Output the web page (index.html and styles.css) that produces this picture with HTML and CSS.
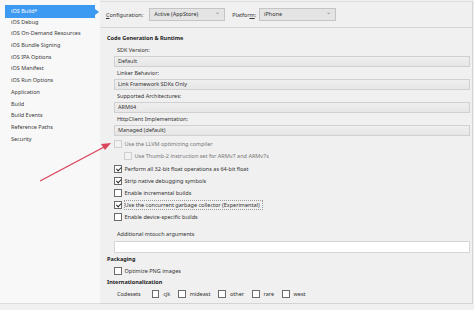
FILE: index.html
```html
<!DOCTYPE html>
<html lang="en">
<head>
    <meta charset="UTF-8">
    <title>iOS Build Options</title>
    <link rel="stylesheet" href="styles.css">
</head>
<body>
    <div class="window">
        <ul class="sidebar">
            <li class="active">iOS Build*</li>
            <li>iOS Debug</li>
            <li>iOS On-Demand Resources</li>
            <li>iOS Bundle Signing</li>
            <li>iOS IPA Options</li>
            <li>iOS Manifest</li>
            <li>iOS Run Options</li>
            <li>Application</li>
            <li>Build</li>
            <li>Build Events</li>
            <li>Reference Paths</li>
            <li>Security</li>
        </ul>

        <div class="main">
            <div class="toolbar">
                <span class="tb-label"><u>C</u>onfiguration:</span>
                <div class="combo combo-config">Active (AppStore)<span class="chev">&#8964;</span></div>
                <span class="tb-label tb-platform">Platfor<u>m</u>:</span>
                <div class="combo combo-platform">iPhone<span class="chev">&#8964;</span></div>
            </div>

            <div class="section-title">Code Generation &amp; Runtime</div>
            <div class="group">
                <div class="field-label">SDK Version:</div>
                <div class="select">Default</div>
                <div class="field-label">Linker Behavior:</div>
                <div class="select">Link Framework SDKs Only</div>
                <div class="field-label">Supported Architectures:</div>
                <div class="select">ARM64</div>
                <div class="field-label">HttpClient Implementation:</div>
                <div class="select">Managed (default)</div>

                <div class="checks">
                    <label class="check disabled"><span class="box"></span>Use the LLVM optimizing compiler</label>
                    <label class="check disabled indent"><span class="box"></span>Use Thumb-2 instruction set for ARMv7 and ARMv7s</label>
                    <label class="check spaced"><span class="box checked"></span>Perform all 32-bit float operations as 64-bit float</label>
                    <label class="check"><span class="box checked"></span>Strip native debugging symbols</label>
                    <label class="check"><span class="box"></span>Enable incremental builds</label>
                    <label class="check"><span class="box checked"></span><span class="focus">Use the concurrent garbage collector (Experimental)</span></label>
                    <label class="check"><span class="box"></span>Enable device-specific builds</label>
                </div>

                <div class="field-label mtouch">Additional mtouch arguments</div>
                <div class="textbox"></div>
            </div>

            <div class="section-title small">Packaging</div>
            <div class="group">
                <label class="check"><span class="box"></span>Optimize PNG images</label>
            </div>

            <div class="section-title small">Internationalization</div>
            <div class="group codesets">
                <span class="codes-label">Codesets</span>
                <label class="check inline"><span class="box"></span>cjk</label>
                <label class="check inline"><span class="box"></span>mideast</label>
                <label class="check inline"><span class="box"></span>other</label>
                <label class="check inline"><span class="box"></span>rare</label>
                <label class="check inline"><span class="box"></span>west</label>
            </div>
        </div>

        <svg class="pointer" width="120" height="60" viewBox="0 0 120 60">
            <line x1="40" y1="51" x2="106" y2="16" stroke="#d9455b" stroke-width="1.4"/>
            <path d="M111 13 L101 14 L105 20 Z" fill="#d9455b"/>
        </svg>
    </div>
</body>
</html>
```

FILE: styles.css
```css
body {
    margin: 0;
    font-family: "Noto Sans", "Open Sans", sans-serif;
    font-size: 5.5px;
    color: #333;
    background: #f0f0f0;
}

.window {
    position: relative;
    display: flex;
    width: 474px;
    height: 310px;
    overflow: hidden;
    background: #f0f0f0;
}

.sidebar {
    list-style: none;
    margin: 0;
    padding: 5px 0 0 5px;
    width: 95px;
    flex-shrink: 0;
    background: #f8f8f8;
    border-bottom: 1px solid #dcdcdc;
    height: 298px;
}

.sidebar li {
    position: relative;
    height: 11.7px;
    line-height: 11.7px;
    padding-left: 6px;
    color: #3a3a3a;
    font-size: 5.5px;
    white-space: nowrap;
}

.sidebar li.active {
    background: #3d9af2;
    color: #fff;
    width: 84px;
    height: 13px;
    line-height: 13px;
    margin-bottom: -1.3px;
}

.sidebar li.active::after {
    content: "";
    position: absolute;
    right: -4px;
    top: 3.5px;
    border-left: 4px solid #3d9af2;
    border-top: 3px solid transparent;
    border-bottom: 3px solid transparent;
}

.main {
    flex: 1;
    margin-top: 1px;
    border-top: 1px solid #dedede;
    border-right: 1px solid #d4d4d4;
    border-bottom: 1px solid #d4d4d4;
    margin-right: 1px;
    height: 301px;
}

.toolbar {
    display: flex;
    align-items: center;
    height: 25px;
    padding-left: 6px;
    border-bottom: 1px solid #d6d6d6;
}

.tb-label {
    color: #333;
    margin-right: 6px;
}

.tb-platform {
    margin-left: 7px;
    margin-right: 3px;
}

.combo {
    position: relative;
    box-sizing: border-box;
    height: 13px;
    line-height: 11px;
    padding-left: 4px;
    background: #e4e4e4;
    border: 1px solid #c4c4c4;
    color: #333;
}

.combo-config {
    width: 76px;
}

.combo-platform {
    width: 77px;
}

.chev {
    position: absolute;
    right: 4px;
    top: -2px;
    color: #777;
    font-size: 6px;
}

.section-title {
    font-weight: bold;
    color: #222;
    padding-left: 7px;
    height: 11px;
    line-height: 11px;
    margin-top: 5px;
}

.section-title.small {
    margin-top: 0;
}

.group {
    padding-left: 14px;
}

.field-label {
    padding-left: 3px;
    height: 12px;
    line-height: 12px;
}

.select {
    box-sizing: border-box;
    height: 11px;
    line-height: 9px;
    padding-left: 3px;
    margin-right: 2px;
    background: linear-gradient(#efefef, #e6e6e6);
    border: 1px solid #d0d0d0;
}

.checks {
    margin-top: 2px;
}

.check {
    display: flex;
    align-items: center;
    height: 12px;
    padding-left: 0;
    white-space: nowrap;
}

.check.indent {
    padding-left: 10px;
}

.check.spaced {
    margin-top: 1px;
}

.check.disabled {
    color: #777;
}

.box {
    position: relative;
    box-sizing: border-box;
    width: 7.5px;
    height: 7.5px;
    margin-right: 3px;
    border: 1px solid #6b6b6b;
    background: #fff;
    flex-shrink: 0;
}

.check.disabled .box {
    border-color: #cfcfcf;
    background: #f2f2f2;
}

.box.checked::after {
    content: "";
    position: absolute;
    left: 1px;
    top: 0;
    width: 4px;
    height: 2px;
    border-left: 1px solid #222;
    border-bottom: 1px solid #222;
    transform: rotate(-45deg) translate(-0.5px, 1px);
}

.focus {
    outline: 1px dotted #999;
    outline-offset: 0;
    padding-right: 2px;
}

.mtouch {
    margin-top: 5px;
    height: 13px;
}

.textbox {
    box-sizing: border-box;
    height: 12px;
    margin-right: 2px;
    margin-bottom: 1px;
    background: #fff;
    border: 1px solid #d6d6d6;
}

.codesets {
    display: flex;
    align-items: center;
    height: 12px;
    padding-left: 17px;
}

.codes-label {
    margin-right: 11px;
}

.check.inline {
    padding-left: 0;
    margin-right: 8px;
}

.check.inline .box {
    margin-right: 4px;
}

.pointer {
    position: absolute;
    left: 0;
    top: 130px;
}
```
